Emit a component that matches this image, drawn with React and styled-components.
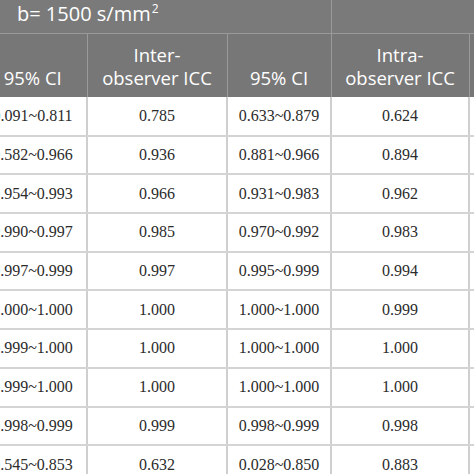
import React from 'react'
import styled, { createGlobalStyle } from 'styled-components'

const Global = createGlobalStyle`
  html, body {
    margin: 0;
    padding: 0;
    background: #ffffff;
    overflow: hidden;
  }
`

const rows = [
    ['0.091~0.811', '0.785', '0.633~0.879', '0.624'],
    ['0.582~0.966', '0.936', '0.881~0.966', '0.894'],
    ['0.954~0.993', '0.966', '0.931~0.983', '0.962'],
    ['0.990~0.997', '0.985', '0.970~0.992', '0.983'],
    ['0.997~0.999', '0.997', '0.995~0.999', '0.994'],
    ['1.000~1.000', '1.000', '1.000~1.000', '0.999'],
    ['0.999~1.000', '1.000', '1.000~1.000', '1.000'],
    ['0.999~1.000', '1.000', '1.000~1.000', '1.000'],
    ['0.998~0.999', '0.999', '0.998~0.999', '0.998'],
    ['0.545~0.853', '0.632', '0.028~0.850', '0.883'],
]

const App = () => {
    return (
        <>
            <Global />
            <Frame>
                <Table>
                    <colgroup>
                        <col style={{ width: 108 }} />
                        <col style={{ width: 140 }} />
                        <col style={{ width: 104 }} />
                        <col style={{ width: 138 }} />
                        <col style={{ width: 120 }} />
                    </colgroup>
                    <thead>
                        <TitleRow>
                            <Title colSpan={3}>b= 1500 s/mm<sup>2</sup></Title>
                            <Title colSpan={2}></Title>
                        </TitleRow>
                        <HeadRow>
                            <Head>95% CI</Head>
                            <Head>Inter-<br />observer ICC</Head>
                            <Head>95% CI</Head>
                            <Head>Intra-<br />observer ICC</Head>
                            <Head></Head>
                        </HeadRow>
                    </thead>
                    <tbody>
                        {rows.map((r, i) => (
                            <Row key={i}>
                                {r.map((v, j) => <Cell key={j}>{v}</Cell>)}
                                <Cell></Cell>
                            </Row>
                        ))}
                    </tbody>
                </Table>
            </Frame>
        </>
    )
}

const Frame = styled.div`
    width: 474px;
    height: 474px;
    overflow: hidden;
`

const Table = styled.table`
    margin-left: -21px;
    border-collapse: collapse;
    table-layout: fixed;
    width: 610px;
`

const TitleRow = styled.tr`
    height: 33px;
    background: #7a7a7a;
`

const Title = styled.th`
    padding: 0 0 7px 38px;
    text-align: left;
    vertical-align: bottom;
    font-family: "Open Sans", "Noto Sans", sans-serif;
    font-weight: 400;
    font-size: 20px;
    line-height: 24px;
    color: #ffffff;
    border-right: 1.5px solid #9a9a9a;
    border-bottom: 1.5px solid #9a9a9a;

    sup {
        font-size: 12px;
        line-height: 0;
        position: relative;
        top: 0;
        margin-left: 1px;
    }
`

const HeadRow = styled.tr`
    height: 64px;
    background: #777777;
`

const Head = styled.th`
    padding: 0 4px 8px;
    text-align: center;
    vertical-align: bottom;
    font-family: "Open Sans", "Noto Sans", sans-serif;
    font-weight: 400;
    font-size: 18.5px;
    line-height: 23px;
    color: #ffffff;
    border-right: 1.5px solid #9a9a9a;
    white-space: nowrap;
`

const Row = styled.tr`
    height: 38.7px;
`

const Cell = styled.td`
    padding: 0;
    text-align: center;
    vertical-align: middle;
    font-family: "Liberation Serif", "Times New Roman", serif;
    font-size: 16px;
    color: #2b2b2b;
    white-space: nowrap;
    border-right: 2px solid #cfcfcf;
    border-bottom: 2px solid #d4d4d4;
`

export default App
